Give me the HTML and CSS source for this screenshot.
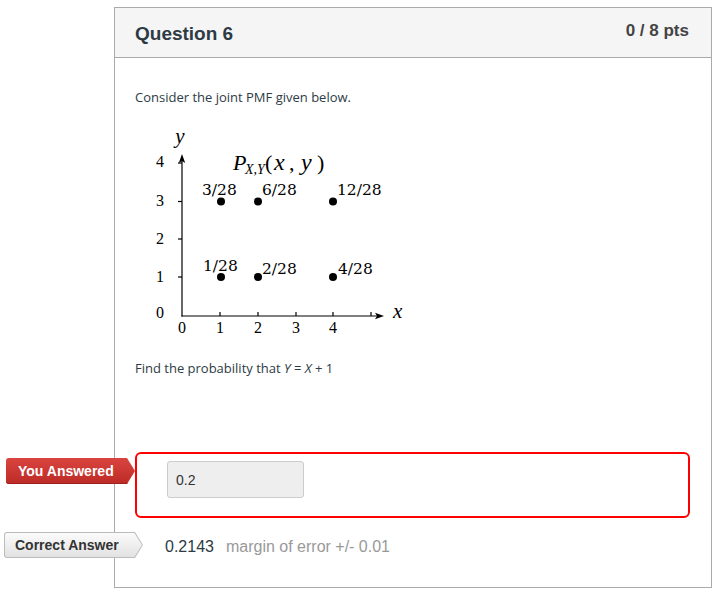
FILE: index.html
```html
<!DOCTYPE html>
<html lang="en">
<head>
<meta charset="utf-8">
<title>Question 6</title>
<link rel="stylesheet" href="styles.css">
</head>
<body>
<div class="card">
  <div class="card-header">
    <h2 class="q-title">Question 6</h2>
    <div class="q-pts">0 / 8 pts</div>
  </div>
  <div class="card-body">
    <p class="q-text">Consider the joint PMF given below.</p>
    <svg class="pmf" viewBox="0 0 280 220" width="280" height="220">
      <g stroke="#000" stroke-width="1.2" fill="none">
        <line x1="47" y1="196.5" x2="47" y2="40"/>
        <line x1="46.4" y1="196" x2="242" y2="196"/>
        <line x1="43" y1="157" x2="47" y2="157"/>
        <line x1="43" y1="119" x2="47" y2="119"/>
        <line x1="43" y1="81.5" x2="47" y2="81.5"/>
        <line x1="43" y1="43" x2="47" y2="43"/>
        <line x1="85" y1="196" x2="85" y2="192"/>
        <line x1="123" y1="196" x2="123" y2="192"/>
        <line x1="161" y1="196" x2="161" y2="192"/>
        <line x1="198" y1="196" x2="198" y2="192"/>
        <line x1="236" y1="196" x2="236" y2="192"/>
      </g>
      <polygon points="47,34 43.8,43 47,41 50.2,43" fill="#000"/>
      <polygon points="249,196 240,192.8 242,196 240,199.2" fill="#000"/>
      <g fill="#000">
        <circle cx="86" cy="81.5" r="4"/>
        <circle cx="123" cy="81.5" r="4"/>
        <circle cx="198" cy="81.5" r="4"/>
        <circle cx="86" cy="157" r="4"/>
        <circle cx="123" cy="157" r="4"/>
        <circle cx="198" cy="157" r="4"/>
      </g>
      <g class="num" text-anchor="middle">
        <text x="25" y="198">0</text>
        <text x="25" y="162">1</text>
        <text x="25" y="124">2</text>
        <text x="25" y="86">3</text>
        <text x="25" y="47">4</text>
        <text x="47" y="213">0</text>
        <text x="85" y="213">1</text>
        <text x="123" y="213">2</text>
        <text x="161" y="213">3</text>
        <text x="198" y="213">4</text>
      </g>
      <g class="frac">
        <text x="67" y="75">3/28</text>
        <text x="127" y="75">6/28</text>
        <text x="202" y="75">12/28</text>
        <text x="68" y="150.5">1/28</text>
        <text x="127" y="154">2/28</text>
        <text x="203" y="154">4/28</text>
      </g>
      <text class="var" x="45" y="23" text-anchor="middle">y</text>
      <text class="var" x="258" y="198">x</text>
      <text class="big it" x="98" y="50">P</text>
      <text class="sub it" x="110" y="54">X,Y</text>
      <text class="big" x="130" y="50">(</text>
      <text class="mv it" x="139" y="50">x</text>
      <text class="big" x="154" y="50">,</text>
      <text class="mv it" x="166" y="50">y</text>
      <text class="big" x="182" y="50">)</text>
    </svg>
    <p class="q-text find">Find the probability that <i>Y</i> = <i>X</i> + 1</p>
    <div class="answer wrong">
      <div class="tag tag-red"><span class="tag-label">You Answered</span></div>
      <div class="answer-input">0.2</div>
    </div>
    <div class="answer correct">
      <div class="tag tag-gray"><span class="tag-label">Correct Answer</span></div>
      <span class="ans-val">0.2143</span>
      <span class="ans-margin">margin of error +/- 0.01</span>
    </div>
  </div>
</div>
</body>
</html>
```

FILE: styles.css
```css
body {
  margin: 0;
  background: #fff;
  font-family: "Open Sans", "Liberation Sans", sans-serif;
}

.card {
  margin: 7px 0 0 114px;
  width: 596px;
  border: 1px solid #aaa;
}

.card-header {
  height: 49px;
  background: #f5f5f5;
  border-bottom: 1px solid #aaa;
  display: flex;
  justify-content: space-between;
  align-items: flex-start;
  padding: 0 22px 0 20px;
}

.q-title {
  margin: 15px 0 0;
  font: bold 19px/22px "Liberation Sans", Arial, sans-serif;
  color: #2d3b45;
}

.q-pts {
  margin-top: 13px;
  font: bold 17px/19px "Liberation Sans", Arial, sans-serif;
  color: #444;
}

.card-body {
  padding: 30px 21px 29px 20px;
}

.q-text {
  margin: 0;
  font-size: 13px;
  line-height: 18px;
  color: #2d3b45;
}

.q-text i {
  font-style: italic;
}

.pmf {
  display: block;
  margin-top: 14px;
  width: 280px;
  height: 220px;
}

.pmf .num {
  font-family: "Liberation Serif", "DejaVu Serif", serif;
  font-size: 16px;
  fill: #000;
}

.pmf .frac {
  font-family: "DejaVu Serif", "Liberation Serif", serif;
  font-size: 15.5px;
  fill: #000;
}

.pmf .var {
  font-family: "Liberation Serif", "DejaVu Serif", serif;
  font-style: italic;
  font-size: 21px;
  fill: #000;
}

.pmf .big {
  font-family: "Liberation Serif", "DejaVu Serif", serif;
  font-size: 22px;
  fill: #000;
}

.pmf .mv {
  font-family: "Liberation Serif", "DejaVu Serif", serif;
  font-size: 24px;
  fill: #000;
}

.pmf .sub {
  font-family: "Liberation Serif", "DejaVu Serif", serif;
  font-size: 14px;
  fill: #000;
}

.pmf .it {
  font-style: italic;
}

.find {
  margin-top: 19px;
}

.answer {
  position: relative;
}

.answer.wrong {
  margin-top: 75px;
  box-sizing: border-box;
  height: 66px;
  border: 2px solid #f00;
  border-radius: 6px;
  padding: 7px 0 0 30px;
}

.answer-input {
  box-sizing: border-box;
  width: 137px;
  height: 37px;
  background: #eee;
  border: 1px solid #ccc;
  border-radius: 3px;
  padding-left: 8px;
  display: flex;
  align-items: center;
  font: 14px "Liberation Sans", Arial, sans-serif;
  color: #333;
}

.answer.correct {
  margin-top: 14px;
  box-sizing: border-box;
  height: 26px;
  padding: 5px 0 0 30px;
  display: flex;
  align-items: flex-start;
  font: 16px/20px "Liberation Sans", Arial, sans-serif;
}

.ans-val {
  color: #2d3b45;
}

.ans-margin {
  margin-left: 12px;
  color: #999;
}

.tag {
  position: absolute;
  box-sizing: border-box;
  height: 26px;
  display: flex;
  align-items: center;
  font: bold 14px/16px "Liberation Sans", Arial, sans-serif;
  border-radius: 3px 0 0 3px;
  clip-path: polygon(0 0, calc(100% - 8px) 0, 100% 50%, calc(100% - 8px) 100%, 0 100%);
}

.tag-label {
  position: relative;
}

.tag-red {
  left: -131px;
  top: 4px;
  width: 129px;
  padding-left: 12px;
  color: #fff;
  background: linear-gradient(#d9443f, #bd2b27);
  box-shadow: inset 0 -1px 0 #9e1f1c;
}

.tag-gray {
  left: -131px;
  top: 0;
  width: 139px;
  padding-left: 11px;
  color: #333;
  background: #bcbcbc;
}

.tag-gray::before {
  content: "";
  position: absolute;
  inset: 1px;
  border-radius: 2px 0 0 2px;
  background: linear-gradient(#fbfbfb, #e2e2e2);
  clip-path: polygon(0 0, calc(100% - 7.6px) 0, 100% 50%, calc(100% - 7.6px) 100%, 0 100%);
}
```
